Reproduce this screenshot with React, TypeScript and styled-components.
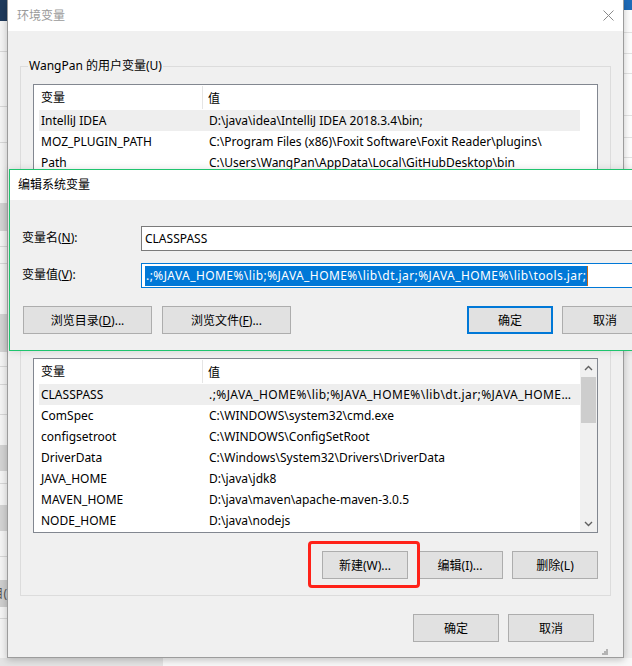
import React from "react";
import styled, { createGlobalStyle, css } from "styled-components";

const FONT = `"Noto Sans", "Noto Sans CJK SC", sans-serif`;

const Global = createGlobalStyle`
  html, body { margin: 0; padding: 0; background: #f5f5f5; }
  body { width: 632px; height: 666px; overflow: hidden; font-family: ${FONT}; font-size: 12px; color: #000; }
  * { box-sizing: border-box; }
`;

type Seg = [number, number, string];
const bands = (base: string, segs: Seg[]) => {
  const stops: string[] = [];
  let y = 0;
  for (const [a, b, c] of segs) {
    if (a > y) stops.push(`${base} ${y}px ${a}px`);
    stops.push(`${c} ${a}px ${b}px`);
    y = b;
  }
  stops.push(`${base} ${y}px`);
  return `linear-gradient(to bottom, ${stops.join(", ")})`;
};

const line = "#d6d6d6";
const block = "#d2d2d2";
const leftBg = bands("#f3f3f3", [
  [0, 21, "#1f3a5c"],
  [51, 52, line],
  [106, 107, line],
  [142, 143, line],
  [203, 231, block],
  [246, 247, line],
  [263, 264, line],
  [314, 352, block],
  [366, 367, line],
  [384, 385, line],
  [414, 415, line],
  [445, 471, block],
  [483, 484, line],
  [505, 531, block],
  [556, 557, line],
  [580, 607, "#cdcdcd"],
  [618, 619, line],
]);

const rightBg = bands("#fdfdfd", [
  [0, 10, "#1e6bb8"],
  [32, 33, "#e2e2e2"],
  [53, 54, "#e2e2e2"],
  [73, 74, "#e2e2e2"],
  [115, 116, "#e2e2e2"],
  [137, 138, "#e2e2e2"],
  [157, 158, "#e2e2e2"],
  [351, 666, "#eeeeee"],
]);

const Screen = styled.div`
  position: relative;
  width: 632px;
  height: 666px;
  overflow: hidden;
  display: flex;
  flex-direction: column;
  font-family: ${FONT};
  font-size: 12px;
`;

const Desk = styled.div`
  display: flex;
  height: 658px;
  flex: none;
`;

const LeftStrip = styled.div`
  width: 7px;
  flex: none;
  background: ${leftBg};
  display: flex;
  flex-direction: column;
`;

const StripLabel = styled.div`
  margin-top: 584px;
  height: 20px;
  line-height: 20px;
  display: flex;
  justify-content: flex-end;
  overflow: hidden;
  color: #555;
  & > span { flex: none; white-space: nowrap; }
`;

const RightStrip = styled.div`
  width: 8px;
  flex: none;
  background: ${rightBg};
`;

const BottomStrip = styled.div`
  height: 8px;
  flex: none;
  background: linear-gradient(to right, #e4e4e4 0 163px, #f8f8f8 163px);
`;

const Window = styled.div`
  position: relative;
  z-index: 1;
  width: 617px;
  height: 658px;
  flex: none;
  border: 1px solid #9c9c9c;
  border-top: none;
  background: #f0f0f0;
  display: flex;
  flex-direction: column;
  box-shadow: 0 2px 7px rgba(0, 0, 0, 0.22);
`;

const TitleBar = styled.div`
  height: 31px;
  flex: none;
  background: #fff;
  display: flex;
  align-items: center;
  justify-content: space-between;
  padding: 0 9px;
`;

const Title = styled.span<{ $inactive?: boolean }>`
  color: ${(p) => (p.$inactive ? "#9a9a9a" : "#000")};
  line-height: 18px;
`;

const Body = styled.div`
  flex: 1;
  display: flex;
  flex-direction: column;
  padding: 0 12px;
`;

const Group = styled.div<{ $mt: number; $pb: number }>`
  margin-top: ${(p) => p.$mt}px;
  border: 1px solid #dcdcdc;
  padding: 0 12px ${(p) => p.$pb}px;
  display: flex;
  flex-direction: column;
  flex: none;
`;

const GroupLabel = styled.div`
  align-self: flex-start;
  margin: -10px 0 0 -5px;
  padding: 0 1px;
  line-height: 18px;
  height: 18px;
  background: #f0f0f0;
  white-space: nowrap;
`;

const ListBox = styled.div<{ $h: number }>`
  margin-top: 9px;
  height: ${(p) => p.$h}px;
  flex: none;
  border: 1px solid #828790;
  background: #fff;
  display: flex;
  overflow: hidden;
`;

const ListMain = styled.div`
  flex: 1;
  min-width: 0;
  display: flex;
  flex-direction: column;
`;

const Header = styled.div`
  height: 25px;
  flex: none;
  display: flex;
  align-items: center;
`;

const HeadCell = styled.div<{ $first?: boolean }>`
  white-space: nowrap;
  ${(p) =>
    p.$first
      ? css`
          width: 169px;
          height: 23px;
          line-height: 23px;
          padding-left: 7px;
          border-right: 1px solid #e5e5e5;
        `
      : css`
          flex: 1;
          padding-left: 5px;
        `}
`;

const Row = styled.div<{ $sel?: boolean }>`
  height: 21px;
  line-height: 21px;
  flex: none;
  margin-left: 5px;
  display: grid;
  grid-template-columns: 168px minmax(0, 1fr);
  background: ${(p) => (p.$sel ? "#eeeeee" : "transparent")};
  white-space: nowrap;
`;

const Cell = styled.div<{ $wide?: boolean }>`
  padding: 0 7px 0 2px;
  overflow: hidden;
  text-overflow: ellipsis;
  letter-spacing: ${(p) => (p.$wide ? "0.42px" : "normal")};
`;

const Lane = styled.div<{ $bar?: boolean }>`
  width: 17px;
  flex: none;
  display: flex;
  flex-direction: column;
  background: ${(p) => (p.$bar ? "#f0f0f0" : "#fff")};
`;

const Arrow = styled.div`
  height: 17px;
  flex: none;
  display: flex;
  align-items: center;
  justify-content: center;
`;

const Track = styled.div`
  flex: 1;
  padding: 1px 1px;
`;

const Thumb = styled.div`
  height: 46px;
  background: #cdcdcd;
`;

const BtnRow = styled.div<{ $mt: number; $pr?: number }>`
  margin-top: ${(p) => p.$mt}px;
  padding-right: ${(p) => p.$pr ?? 0}px;
  display: flex;
  justify-content: flex-end;
  gap: 9px;
  flex: none;
`;

const Btn = styled.button<{ $w: number; $default?: boolean }>`
  width: ${(p) => p.$w}px;
  height: 28px;
  flex: none;
  padding: 0;
  margin: 0;
  background: #e1e1e1;
  border: 1px solid #adadad;
  font-family: ${FONT};
  font-size: 12px;
  color: #000;
  white-space: nowrap;
  ${(p) =>
    p.$default &&
    css`
      border: 2px solid #0078d7;
    `}
`;

const GripRow = styled.div`
  margin-top: 6px;
  padding-right: 3px;
  display: flex;
  justify-content: flex-end;
  flex: none;
`;

const Dialog = styled.div`
  position: absolute;
  z-index: 2;
  left: 9px;
  top: 169px;
  width: 652px;
  height: 182px;
  border: 1px solid #1fc46e;
  background: #f0f0f0;
  display: flex;
  flex-direction: column;
  box-shadow: 0 0 8px rgba(0, 0, 0, 0.12);
`;

const DlgTitle = styled.div`
  height: 30px;
  flex: none;
  background: #fff;
  padding-left: 8px;
  display: flex;
  align-items: center;
`;

const DlgBody = styled.div`
  padding: 26px 12px 0;
  display: flex;
  flex-direction: column;
`;

const Fields = styled.div`
  display: grid;
  grid-template-columns: 119px 1fr;
  row-gap: 12px;
  align-items: center;
`;

const FieldLabel = styled.span`
  line-height: 18px;
  margin-top: -1px;
`;

const Field = styled.div<{ $focus?: boolean }>`
  height: 25px;
  border: 1px solid ${(p) => (p.$focus ? "#0078d7" : "#7a7a7a")};
  background: #fff;
  padding-left: 3px;
  line-height: 23px;
  white-space: nowrap;
  overflow: hidden;
  display: flex;
  align-items: center;
`;

const Selected = styled.span`
  background: #0078d7;
  color: #fff;
  line-height: 20px;
  padding-left: 1px;
  letter-spacing: 0.42px;
`;

const Caret = styled.span`
  display: inline-block;
  width: 1px;
  height: 20px;
  background: #c0661a;
`;

const DlgButtons = styled.div`
  margin-top: 18px;
  display: flex;
  justify-content: space-between;
`;

const BtnGroup = styled.div<{ $gap: number; $ml?: number }>`
  display: flex;
  gap: ${(p) => p.$gap}px;
  margin-left: ${(p) => p.$ml ?? 0}px;
`;

const Annotation = styled.div`
  position: absolute;
  z-index: 3;
  left: 308px;
  top: 541px;
  width: 112px;
  height: 47px;
  border: 3px solid #ff2219;
  border-radius: 4px;
`;

const Chevron = ({ up }: { up?: boolean }) => (
  <svg width="9" height="6" viewBox="0 0 9 6">
    <path
      d={up ? "M1 5 L4.5 1.5 L8 5" : "M1 1 L4.5 4.5 L8 1"}
      fill="none"
      stroke="#606060"
      strokeWidth="1.4"
    />
  </svg>
);

const CloseIcon = () => (
  <svg width="11" height="11" viewBox="0 0 11 11">
    <path d="M0.5 0.5 L10.5 10.5 M10.5 0.5 L0.5 10.5" stroke="#8a8a8a" strokeWidth="1" fill="none" />
  </svg>
);

const Grip = () => (
  <svg width="7" height="7" viewBox="0 0 7 7">
    {[
      [5, 0],
      [3, 2],
      [5, 2],
      [1, 4],
      [3, 4],
      [5, 4],
    ].map(([x, y], i) => (
      <rect key={i} x={x} y={y + 1} width="2" height="2" fill="#b4b4b4" />
    ))}
  </svg>
);

type Item = [string, string, boolean?];

const userVars: Item[] = [
  ["IntelliJ IDEA", "D:\\java\\idea\\IntelliJ IDEA 2018.3.4\\bin;"],
  ["MOZ_PLUGIN_PATH", "C:\\Program Files (x86)\\Foxit Software\\Foxit Reader\\plugins\\"],
  ["Path", "C:\\Users\\WangPan\\AppData\\Local\\GitHubDesktop\\bin"],
  ["TEMP", "C:\\Users\\WangPan\\AppData\\Local\\Temp"],
  ["TMP", "C:\\Users\\WangPan\\AppData\\Local\\Temp"],
];

const sysVars: Item[] = [
  ["CLASSPASS", ".;%JAVA_HOME%\\lib;%JAVA_HOME%\\lib\\dt.jar;%JAVA_HOME%\\lib\\tools.jar;", true],
  ["ComSpec", "C:\\WINDOWS\\system32\\cmd.exe"],
  ["configsetroot", "C:\\WINDOWS\\ConfigSetRoot"],
  ["DriverData", "C:\\Windows\\System32\\Drivers\\DriverData"],
  ["JAVA_HOME", "D:\\java\\jdk8"],
  ["MAVEN_HOME", "D:\\java\\maven\\apache-maven-3.0.5"],
  ["NODE_HOME", "D:\\java\\nodejs"],
  ["NUMBER_OF_PROCESSORS", "4"],
];

const VarList = ({ items, height, scroll }: { items: Item[]; height: number; scroll?: boolean }) => (
  <ListBox $h={height}>
    <ListMain>
      <Header>
        <HeadCell $first>变量</HeadCell>
        <HeadCell>值</HeadCell>
      </Header>
      {items.map(([k, v, wide], i) => (
        <Row key={k} $sel={i === 0}>
          <Cell>{k}</Cell>
          <Cell $wide={wide}>{v}</Cell>
        </Row>
      ))}
    </ListMain>
    {scroll ? (
      <Lane $bar>
        <Arrow>
          <Chevron up />
        </Arrow>
        <Track>
          <Thumb />
        </Track>
        <Arrow>
          <Chevron />
        </Arrow>
      </Lane>
    ) : (
      <Lane />
    )}
  </ListBox>
);

export default function App() {
  return (
    <>
      <Global />
      <Screen>
        <Desk>
          <LeftStrip>
            <StripLabel>
              <span>浏览目(</span>
            </StripLabel>
          </LeftStrip>
          <Window>
            <TitleBar>
              <Title $inactive>环境变量</Title>
              <CloseIcon />
            </TitleBar>
            <Body>
              <Group $mt={35} $pb={14}>
                <GroupLabel>WangPan 的用户变量(U)</GroupLabel>
                <VarList items={userVars} height={166} />
                <BtnRow $mt={12}>
                  <Btn $w={86}>新建(N)...</Btn>
                  <Btn $w={86}>编辑(E)...</Btn>
                  <Btn $w={86}>删除(D)</Btn>
                </BtnRow>
              </Group>
              <Group $mt={35} $pb={16}>
                <GroupLabel>系统变量(S)</GroupLabel>
                <VarList items={sysVars} height={175} scroll />
                <BtnRow $mt={18}>
                  <Btn $w={86}>新建(W)...</Btn>
                  <Btn $w={86}>编辑(I)...</Btn>
                  <Btn $w={86}>删除(L)</Btn>
                </BtnRow>
              </Group>
              <BtnRow $mt={18} $pr={17}>
                <Btn $w={86}>确定</Btn>
                <Btn $w={86}>取消</Btn>
              </BtnRow>
              <GripRow>
                <Grip />
              </GripRow>
            </Body>
          </Window>
          <RightStrip />
        </Desk>
        <BottomStrip />

        <Dialog>
          <DlgTitle>
            <Title>编辑系统变量</Title>
          </DlgTitle>
          <DlgBody>
            <Fields>
              <FieldLabel>
                变量名(<u>N</u>):
              </FieldLabel>
              <Field>CLASSPASS</Field>
              <FieldLabel>
                变量值(<u>V</u>):
              </FieldLabel>
              <Field $focus>
                <Selected>.;%JAVA_HOME%\lib;%JAVA_HOME%\lib\dt.jar;%JAVA_HOME%\lib\tools.jar;</Selected>
                <Caret />
              </Field>
            </Fields>
            <DlgButtons>
              <BtnGroup $gap={10} $ml={1}>
                <Btn $w={129}>
                  浏览目录(<u>D</u>)...
                </Btn>
                <Btn $w={129}>
                  浏览文件(<u>F</u>)...
                </Btn>
              </BtnGroup>
              <BtnGroup $gap={9}>
                <Btn $w={86} $default>
                  确定
                </Btn>
                <Btn $w={86}>取消</Btn>
              </BtnGroup>
            </DlgButtons>
          </DlgBody>
        </Dialog>
        <Annotation />
      </Screen>
    </>
  );
}
